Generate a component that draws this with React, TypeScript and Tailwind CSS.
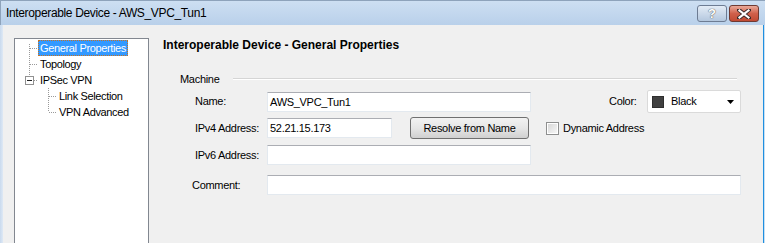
import React from "react";

const dot = "#9a9a9a";

function TreeRow({
	label,
	prefix,
	selected,
}: {
	label: string;
	prefix: React.ReactNode;
	selected?: boolean;
}) {
	return (
		<div className="flex h-[16px] items-center">
			{prefix}
			<span
				className={
					selected
						? "h-[16px] bg-[#3399ff] px-[1px] leading-[14px] text-white outline outline-1 outline-dotted outline-[#c9721f] -outline-offset-1 border border-transparent"
						: "px-[2px] leading-[16px] text-black"
				}
			>
				{label}
			</span>
		</div>
	);
}

function RootLine({ kind }: { kind: "first" | "mid" | "last" }) {
	return (
		<svg width="23" height="16" className="shrink-0" shapeRendering="crispEdges">
			{kind === "first" && (
				<line x1="14.5" y1="4" x2="14.5" y2="16" stroke={dot} strokeDasharray="1 1" />
			)}
			{kind === "mid" && (
				<line x1="14.5" y1="0" x2="14.5" y2="16" stroke={dot} strokeDasharray="1 1" />
			)}
			{kind === "last" ? (
				<>
					<line x1="14.5" y1="0" x2="14.5" y2="4" stroke={dot} strokeDasharray="1 1" />
					<rect x="10.5" y="4.5" width="8" height="8" fill="#fff" stroke="#919191" />
					<line x1="12" y1="8.5" x2="17" y2="8.5" stroke="#222" />
					<line x1="19" y1="8.5" x2="23" y2="8.5" stroke={dot} strokeDasharray="1 1" />
				</>
			) : (
				<line x1="15" y1="8.5" x2="23" y2="8.5" stroke={dot} strokeDasharray="1 1" />
			)}
		</svg>
	);
}

function ChildLine({ last }: { last?: boolean }) {
	return (
		<svg width="42" height="16" className="shrink-0" shapeRendering="crispEdges">
			<line
				x1="33.5"
				y1="0"
				x2="33.5"
				y2={last ? 8 : 16}
				stroke={dot}
				strokeDasharray="1 1"
			/>
			<line x1="34" y1="8.5" x2="42" y2="8.5" stroke={dot} strokeDasharray="1 1" />
		</svg>
	);
}

function TextBox({ value, w }: { value?: string; w: string }) {
	return (
		<div
			className={`${w} h-[20px] shrink-0 border border-[#e3e9ef] border-t-[#abadb3] bg-white pl-[2px] leading-[18px] text-black`}
		>
			{value}
		</div>
	);
}

export default function App() {
	return (
		<div className="relative flex h-[243px] w-[765px] flex-col overflow-hidden bg-[#f0f0f0] font-['Liberation_Sans',Arial,sans-serif] text-[11px] text-black">
			{/* title bar */}
			<div className="flex h-[25px] shrink-0 items-center border-l border-t border-[#8ea3bb] bg-gradient-to-b from-[#cddff2] to-[#b9d0ea]">
				<span className="ml-[5px] text-[12px] tracking-[-0.35px] text-black">
					Interoperable Device - AWS_VPC_Tun1
				</span>
				<div className="ml-auto mr-[6px] flex gap-[2px] self-start pt-[4px]">
					<div className="flex h-[17px] w-[30px] items-center justify-center rounded-[3px] border border-[#6d7c93] bg-gradient-to-b from-[#e3ecf6] to-[#b4c7de]">
						<span className="text-[13px] font-bold leading-none text-white [text-shadow:0_0_1px_#555,0_0_1px_#555]">
							?
						</span>
					</div>
					<div className="flex h-[17px] w-[30px] items-center justify-center rounded-[3px] border border-[#6f3a32] bg-gradient-to-b from-[#e9a99a] via-[#d0604b] to-[#c14a33]">
						<svg width="14" height="10" viewBox="0 0 14 10">
							<path
								d="M2 1 L12 9 M12 1 L2 9"
								stroke="#3a2a2a"
								strokeWidth="4"
								strokeLinecap="square"
							/>
							<path
								d="M2.5 1.5 L11.5 8.5 M11.5 1.5 L2.5 8.5"
								stroke="#fff"
								strokeWidth="2.2"
								strokeLinecap="square"
							/>
						</svg>
					</div>
				</div>
			</div>

			{/* body */}
			<div className="flex min-h-0 flex-1">
				<div className="w-[3px] shrink-0 bg-gradient-to-r from-[#c9daee] to-[#dfe9f5]" />

				{/* tree */}
				<div className="ml-[11px] mt-[13px] w-[135px] shrink-0 border-x border-t border-[#828790] bg-white pt-[1px] tracking-[-0.35px]">
					<TreeRow label="General Properties" prefix={<RootLine kind="first" />} selected />
					<TreeRow label="Topology" prefix={<RootLine kind="mid" />} />
					<TreeRow label="IPSec VPN" prefix={<RootLine kind="last" />} />
					<TreeRow label="Link Selection" prefix={<ChildLine />} />
					<TreeRow label="VPN Advanced" prefix={<ChildLine last />} />
				</div>

				{/* properties */}
				<div className="flex min-w-0 flex-1 flex-col pt-[13px] tracking-[-0.3px]">
					<div className="ml-[14px] h-[15px] text-[12px] font-bold leading-[15px] tracking-normal">
						Interoperable Device - General Properties
					</div>

					<div className="mt-[19px] flex h-[14px] items-center">
						<span className="ml-[31px] leading-[14px]">Machine</span>
						<div className="ml-[14px] mr-[24px] h-[2px] flex-1 border-b border-t border-b-white border-t-[#d5d5d5]" />
					</div>

					<div className="ml-[46px] mt-[4px] flex h-[23px] items-center">
						<span className="w-[72px] shrink-0">Name:</span>
						<TextBox value="AWS_VPC_Tun1" w="w-[264px]" />
						<span className="ml-[78px] w-[38px] shrink-0">Color:</span>
						<div className="flex h-[23px] w-[94px] shrink-0 items-center rounded-[2px] border border-[#dadada] bg-white">
							<div className="ml-[4px] h-[12px] w-[12px] border border-[#2e2e2e] bg-[#404040]" />
							<span className="ml-[7px]">Black</span>
							<svg width="7" height="4" className="ml-auto mr-[6px]">
								<path d="M0 0 H7 L3.5 4 Z" fill="#000" />
							</svg>
						</div>
					</div>

					<div className="ml-[46px] mt-[4px] flex h-[22px] items-center">
						<span className="w-[72px] shrink-0">IPv4 Address:</span>
						<TextBox value="52.21.15.173" w="w-[125px]" />
						<div className="ml-[18px] flex h-[22px] w-[119px] shrink-0 items-center justify-center rounded-[3px] border border-[#707070] bg-gradient-to-b from-[#f2f2f2] via-[#e6e6e6] to-[#d0d0d0]">
							Resolve from Name
						</div>
						<div className="ml-[17px] flex h-[13px] w-[13px] shrink-0 items-center justify-center border border-[#8e8f8f] bg-white">
							<div className="h-[9px] w-[9px] bg-gradient-to-br from-[#d8d8d8] to-[#f6f6f6]" />
						</div>
						<span className="ml-[4px]">Dynamic Address</span>
					</div>

					<div className="ml-[46px] mt-[6px] flex h-[20px] items-center">
						<span className="w-[72px] shrink-0">IPv6 Address:</span>
						<TextBox w="w-[264px]" />
					</div>

					<div className="ml-[43px] mt-[10px] flex h-[20px] items-center">
						<span className="w-[75px] shrink-0">Comment:</span>
						<TextBox w="w-[474px]" />
					</div>
				</div>

				<div className="w-[2px] shrink-0 bg-[#f0f0f0]" />
				<div className="w-[1px] shrink-0 bg-[#1f8fe0]" />
				<div className="w-[1px] shrink-0 bg-[#c8dff2]" />
			</div>
		</div>
	);
}
